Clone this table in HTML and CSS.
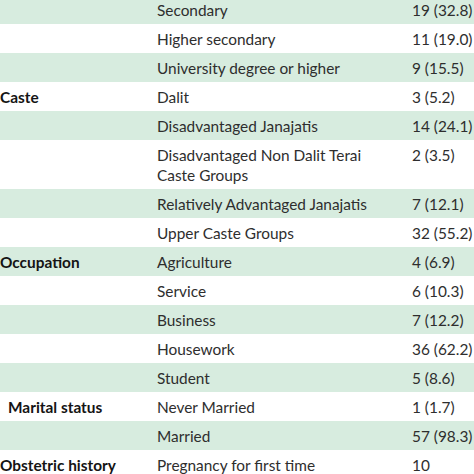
FILE: index.html
```html
<!DOCTYPE html>
<html lang="en">
<head>
<meta charset="utf-8">
<title>Characteristics table</title>
<link rel="stylesheet" href="styles.css">
</head>
<body>
<div class="table">
  <div class="row alt"><div class="c1"></div><div class="c2">Secondary</div><div class="c3">19 (32.8)</div></div>
  <div class="row"><div class="c1"></div><div class="c2">Higher secondary</div><div class="c3">11 (19.0)</div></div>
  <div class="row alt"><div class="c1"></div><div class="c2">University degree or higher</div><div class="c3">9 (15.5)</div></div>
  <div class="row"><div class="c1">Caste</div><div class="c2">Dalit</div><div class="c3">3 (5.2)</div></div>
  <div class="row alt"><div class="c1"></div><div class="c2">Disadvantaged Janajatis</div><div class="c3">14 (24.1)</div></div>
  <div class="row"><div class="c1"></div><div class="c2">Disadvantaged Non Dalit Terai Caste Groups</div><div class="c3">2 (3.5)</div></div>
  <div class="row alt"><div class="c1"></div><div class="c2">Relatively Advantaged Janajatis</div><div class="c3">7 (12.1)</div></div>
  <div class="row"><div class="c1"></div><div class="c2">Upper Caste Groups</div><div class="c3">32 (55.2)</div></div>
  <div class="row alt"><div class="c1">Occupation</div><div class="c2">Agriculture</div><div class="c3">4 (6.9)</div></div>
  <div class="row"><div class="c1"></div><div class="c2">Service</div><div class="c3">6 (10.3)</div></div>
  <div class="row alt"><div class="c1"></div><div class="c2">Business</div><div class="c3">7 (12.2)</div></div>
  <div class="row"><div class="c1"></div><div class="c2">Housework</div><div class="c3">36 (62.2)</div></div>
  <div class="row alt"><div class="c1"></div><div class="c2">Student</div><div class="c3">5 (8.6)</div></div>
  <div class="row"><div class="c1 indent">Marital status</div><div class="c2">Never Married</div><div class="c3">1 (1.7)</div></div>
  <div class="row alt"><div class="c1"></div><div class="c2">Married</div><div class="c3">57 (98.3)</div></div>
  <div class="row"><div class="c1">Obstetric history</div><div class="c2">Pregnancy for first time</div><div class="c3">10</div></div>
</div>
</body>
</html>
```
FILE: styles.css
```css
html, body {
  margin: 0;
  padding: 0;
  background: #ffffff;
  overflow: hidden;
}
body {
  font-family: Lato, "Open Sans", "Liberation Sans", sans-serif;
  font-size: 15.4px;
  color: #2e2e2e;
}
.table {
  display: flex;
  flex-direction: column;
  margin-top: -5px;
}
.row {
  display: grid;
  grid-template-columns: 150px 255px 1fr;
  padding: 5px 0 4px;
  line-height: 20px;
}
.row.alt {
  background: #d7ecdf;
}
.c1 {
  font-weight: 700;
  color: #141414;
  padding-left: 0;
  white-space: nowrap;
}
.c1.indent {
  padding-left: 8px;
}
.c2 {
  padding: 0 14px 0 7px;
}
.c3 {
  padding-left: 7px;
  white-space: nowrap;
}
```
